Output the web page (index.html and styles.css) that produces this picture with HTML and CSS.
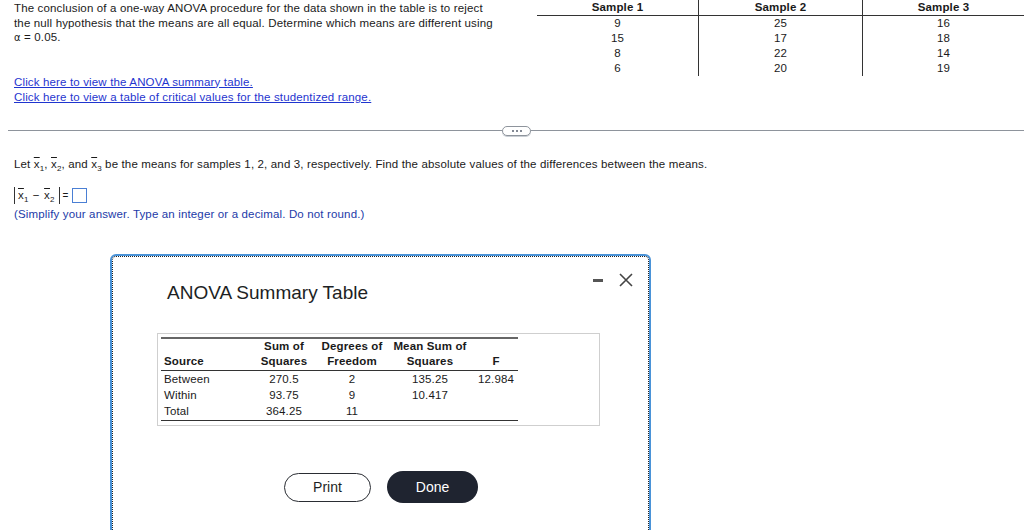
FILE: index.html
```html
<!DOCTYPE html>
<html>
<head>
<meta charset="utf-8">
<link rel="stylesheet" href="styles.css">
</head>
<body>
<div class="top">
  <div class="question">
    <p>The conclusion of a one-way ANOVA procedure for the data shown in the table is to reject the null hypothesis that the means are all equal. Determine which means are different using <span class="alpha">α</span> = 0.05.</p>
    <div class="links">
      <a href="#">Click here to view the ANOVA summary table.</a><br>
      <a href="#">Click here to view a table of critical values for the studentized range.</a>
    </div>
  </div>
  <table class="data">
    <thead>
      <tr><th>Sample 1</th><th>Sample 2</th><th>Sample 3</th></tr>
    </thead>
    <tbody>
      <tr><td>9</td><td>25</td><td>16</td></tr>
      <tr><td>15</td><td>17</td><td>18</td></tr>
      <tr><td>8</td><td>22</td><td>14</td></tr>
      <tr><td>6</td><td>20</td><td>19</td></tr>
    </tbody>
  </table>
</div>

<div class="divider">
  <span class="line left"></span>
  <span class="pill"><i></i><i></i><i></i></span>
  <span class="line right"></span>
</div>

<div class="part">
  <p class="let">Let <span class="xb">x</span><sub>1</sub>, <span class="xb">x</span><sub>2</sub>, and <span class="xb">x</span><sub>3</sub> be the means for samples 1, 2, and 3, respectively. Find the absolute values of the differences between the means.</p>
  <div class="expr">
    <span class="abs"><span class="xb">x</span><sub>1</sub> − <span class="xb">x</span><sub>2</sub></span>
    <span class="eq">=</span>
    <span class="answer"></span>
  </div>
  <p class="hint">(Simplify your answer. Type an integer or a decimal. Do not round.)</p>
</div>

<div class="dialog">
  <div class="controls">
    <span class="minimize"></span>
    <svg class="close" width="14" height="14" viewBox="0 0 14 14"><path d="M1 1 L13 13 M13 1 L1 13" stroke="#444" stroke-width="1.6" fill="none"/></svg>
  </div>
  <h2 class="title">ANOVA Summary Table</h2>
  <div class="box">
    <table class="anova">
      <thead>
        <tr>
          <th class="src">Source</th>
          <th>Sum of<br>Squares</th>
          <th>Degrees of<br>Freedom</th>
          <th>Mean Sum of<br>Squares</th>
          <th>F</th>
        </tr>
      </thead>
      <tbody>
        <tr><td class="src">Between</td><td>270.5</td><td>2</td><td>135.25</td><td>12.984</td></tr>
        <tr><td class="src">Within</td><td>93.75</td><td>9</td><td>10.417</td><td></td></tr>
        <tr><td class="src">Total</td><td>364.25</td><td>11</td><td></td><td></td></tr>
      </tbody>
    </table>
  </div>
  <div class="buttons">
    <button class="btn print">Print</button>
    <button class="btn done">Done</button>
  </div>
</div>
</body>
</html>
```

FILE: styles.css
```css
html, body {
  margin: 0;
  padding: 0;
  background: #fff;
}
body {
  font-family: "Liberation Sans", Arial, sans-serif;
  font-size: 11.5px;
  letter-spacing: 0.15px;
  color: #1a1a1a;
  position: relative;
  height: 530px;
  overflow: hidden;
}
p { margin: 0; }

.top {
  display: flex;
  align-items: flex-start;
}
.question {
  width: 482px;
  padding: 1px 41px 0 14px;
  line-height: 14.5px;
}
.alpha { font-family: "DejaVu Sans", sans-serif; font-size: 10px; }
.links {
  margin-top: 29px;
  line-height: 15px;
}
.links a {
  color: #1f35cf;
  text-decoration: underline;
}

.data {
  flex: 1;
  border-collapse: collapse;
  margin-top: 0;
}
.data th, .data td {
  text-align: center;
  height: 15px;
  padding: 0;
  line-height: 15px;
  border-left: 1px solid #333;
}
.data th:first-child, .data td:first-child { border-left: none; }
.data th {
  font-weight: bold;
  border-bottom: 1px solid #333;
}
.data th:nth-child(1) { width: 161px; }
.data th:nth-child(2) { width: 163px; }

.divider {
  display: flex;
  align-items: center;
  margin: 21px 0 0 8px;
  height: 10px;
}
.line {
  height: 1px;
  background: #8e949c;
}
.line.left { width: 494px; }
.line.right { flex: 1; }
.pill {
  width: 27px;
  height: 8px;
  border: 1px solid #8e949c;
  border-radius: 5px;
  display: flex;
  align-items: center;
  justify-content: center;
  gap: 2px;
  box-shadow: 0 1px 0 #c9ced4;
}
.pill i {
  width: 2px;
  height: 2px;
  background: #5a6270;
  border-radius: 1px;
}

.part {
  padding: 21px 0 0 14px;
}
.let { line-height: 15px; }
.xb { text-decoration: overline; }
sub { font-size: 8px; vertical-align: -3px; line-height: 0; }
.expr {
  display: flex;
  align-items: center;
  gap: 3px;
  margin-top: 15px;
  height: 17px;
}
.abs {
  border-left: 1px solid #333;
  border-right: 1px solid #333;
  padding: 0 4px 0 3px;
  height: 17px;
  line-height: 17px;
  word-spacing: 1px;
}
.eq { font-size: 10px; }
.answer {
  width: 13px;
  height: 13px;
  border: 1px solid #4a7fd4;
  background: #fff;
}
.hint {
  color: #1c3aa8;
  margin-top: 3px;
  line-height: 15px;
}

.dialog {
  position: absolute;
  left: 110px;
  top: 254px;
  width: 537px;
  height: 320px;
  background: #fff;
  border: 2px solid #4a93d8;
  border-radius: 6px 6px 0 0;
  outline: 1px dotted #222;
  outline-offset: -3px;
  letter-spacing: 0;
}
.controls {
  position: absolute;
  top: 17px;
  right: 16px;
  display: flex;
  align-items: center;
  gap: 16px;
}
.minimize {
  width: 10px;
  height: 3px;
  background: #555;
}
.title {
  margin: 26px 0 0 55px;
  font-size: 19px;
  font-weight: normal;
  line-height: 22px;
  color: #1d1f24;
  letter-spacing: 0;
}
.box {
  margin: 29px 0 0 45px;
  width: 443px;
  border: 1px solid #cfcfcf;
  padding: 3px 0 0 3px;
  box-sizing: border-box;
  height: 93px;
}
.anova {
  border-collapse: collapse;
  border-top: 2px solid #666;
  border-bottom: 1px solid #333;
  width: 357px;
  letter-spacing: 0.15px;
}
.anova th, .anova td {
  padding: 0;
  text-align: center;
  line-height: 15px;
}
.anova th {
  font-weight: bold;
  vertical-align: bottom;
  border-bottom: 1px solid #333;
  padding: 0 0 1px;
}
.anova td { height: 16px; line-height: 16px; }
.anova tbody tr:last-child td { padding-bottom: 1px; }
.anova .src { text-align: left; padding-left: 3px; }
.anova th:nth-child(1) { width: 86px; }
.anova th:nth-child(2) { width: 68px; }
.anova th:nth-child(3) { width: 68px; }
.anova th:nth-child(4) { width: 88px; }

.buttons {
  display: flex;
  align-items: center;
  gap: 16px;
  margin: 45px 0 0 172px;
}
.btn {
  font-family: "Liberation Sans", Arial, sans-serif;
  font-size: 14px;
  border-radius: 16px;
  cursor: pointer;
}
.print {
  width: 87px;
  height: 29px;
  background: #fff;
  border: 1.5px solid #2a2d33;
  color: #1d1f24;
}
.done {
  width: 91px;
  height: 32px;
  background: #1f2430;
  border: none;
  color: #fff;
}
```
